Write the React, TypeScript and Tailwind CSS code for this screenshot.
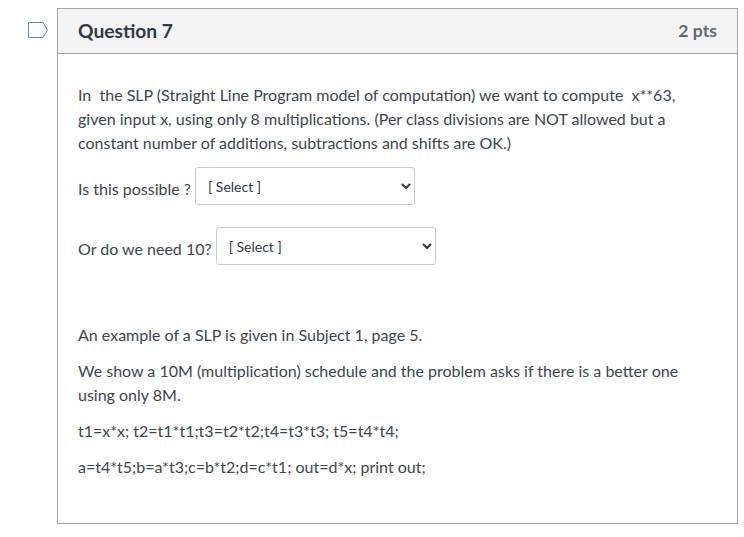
const SelectBox = () => (
  <select className="h-[38px] w-[220px] rounded-[3px] border border-[#c7cdd1] bg-white py-1.5 pl-2 pr-1.5 align-middle text-sm text-[#2d3b45] [font-family:Lato,sans-serif]">
    <option>[ Select ]</option>
  </select>
);

const App = () => {
  return (
    <div className="flex h-[537px] w-[744px] items-start overflow-hidden bg-white pt-2 pr-1.5 text-base leading-6 text-[#3a474f] [font-family:Lato,sans-serif]">
      <div className="flex w-[57px] shrink-0 justify-end pt-[14px] pr-[8px]">
        <svg width="21" height="16" viewBox="0 0 21 16" fill="none" className="block">
          <path d="M0.5 0.5H15L19.5 8L15 15.5H0.5V0.5Z" stroke="#5b90b0" strokeWidth="1" strokeLinejoin="miter" fill="white" />
        </svg>
      </div>

      <div className="h-[516px] w-[681px] border border-[#a6a6a6]">
        <div className="flex h-[45px] items-center justify-between border-b border-[#a6a6a6] bg-[#f4f4f4] px-5">
          <h2 className="text-[19.2px] font-bold text-[#2d3b45]">Question 7</h2>
          <span className="text-[17.6px] font-bold text-[#5f6a72]">2 pts</span>
        </div>

        <div className="pl-5 pr-10 pt-[29px]">
          <p className="mb-3">
            In&nbsp; the SLP (Straight Line Program model of computation) we want to compute&nbsp; x**63, given input x, using only 8 multiplications. (Per class divisions are NOT allowed but a constant number of additions, subtractions and shifts are OK.)
          </p>
          <p className="mb-[22px] flex items-center gap-1">
            <span className="pt-1.5">Is this possible ?</span> <SelectBox />
          </p>
          <p className="mb-[58px] flex items-center gap-1">
            <span className="pt-1.5">Or do we need 10?</span> <SelectBox />
          </p>
          <p className="mb-3">An example of a SLP is given in Subject 1, page 5.</p>
          <p className="mb-3">
            We show a 10M (multiplication) schedule and the problem asks if there is a better one using only 8M.
          </p>
          <p className="mb-3">t1=x*x; t2=t1*t1;t3=t2*t2;t4=t3*t3; t5=t4*t4;</p>
          <p>a=t4*t5;b=a*t3;c=b*t2;d=c*t1; out=d*x; print out;</p>
        </div>
      </div>
    </div>
  );
};

export default App;
